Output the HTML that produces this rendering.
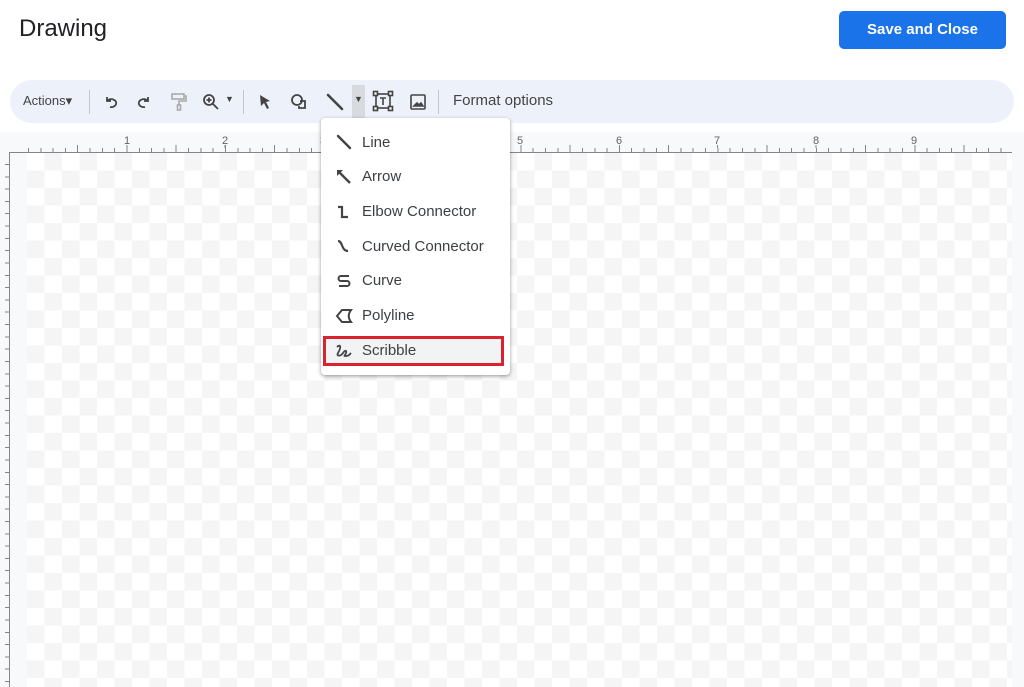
<!DOCTYPE html>
<html><head><meta charset="utf-8"><style>
*{margin:0;padding:0;box-sizing:border-box}
body{width:1024px;height:687px;overflow:hidden;background:#fff;font-family:"Liberation Sans",Arial,sans-serif;position:relative;color:#3c4043}
.title{position:absolute;left:19px;top:15px;font-size:24px;color:#202124}
.btn{position:absolute;left:839px;top:11px;width:167px;height:38px;background:#1a73e8;border-radius:5px;color:#fff;font-weight:bold;font-size:15px;text-align:center;line-height:38px}
.tb{position:absolute;left:10px;top:80px;width:1004px;height:43px;background:#edf2fa;border-radius:22px}
.tb *{position:absolute}
.sep{width:1px;height:24px;background:#c4c7c5;top:10px}
.canvas{position:absolute;left:0;top:132px;width:1024px;height:555px;background:#f8f9fa}
.checker{position:absolute;left:27px;top:153px;width:985px;height:534px;background-color:#fff;
background-image:conic-gradient(#f5f5f5 25%,#fff 0 50%,#f5f5f5 0 75%,#fff 0);background-size:35px 35px}
.hl{position:absolute;left:9px;top:152px;width:1003px;height:1px;background:#80868b}
.vl{position:absolute;left:9px;top:152px;width:1px;height:535px;background:#80868b}
.ht{position:absolute;left:28px;top:148px;width:984px;height:4px;background:repeating-linear-gradient(90deg,#80868b 0 1px,transparent 1px 12.31px)}
.ht2{position:absolute;left:77px;top:145px;width:935px;height:3px;background:repeating-linear-gradient(90deg,#80868b 0 1px,transparent 1px 49.25px)}
.vt{position:absolute;left:5px;top:153px;width:4px;height:534px;background:repeating-linear-gradient(180deg,transparent 0 11px,#80868b 11px 12px,transparent 12px 12.31px)}
.num{position:absolute;top:135px;font-size:11px;color:#5f6368}
.menu{position:absolute;left:321px;top:118px;width:189px;height:257px;background:#fff;border-radius:4px;box-shadow:0 1px 3px rgba(0,0,0,.3),0 2px 6px rgba(0,0,0,.12)}
.it{position:absolute;left:41px;font-size:15px;color:#3c4043}
.ic{position:absolute;left:14px}
.sel{position:absolute;left:2px;top:218px;width:181px;height:30px;background:#f1f3f4;border:3px solid #d9232e}
</style></head><body>
<div class="title">Drawing</div>
<div class="btn">Save and Close</div>
<div class="tb">
<span style="left:13px;top:13px;font-size:13px;color:#444">Actions&#9662;</span>
<div class="sep" style="left:79px"></div>
<svg style="left:91px;top:12px" width="20" height="20" viewBox="0 0 20 20" fill="none" stroke="#444" stroke-width="1.8"><path d="M6 5v4h4M6 9a5 4 0 1 1 3 6"/></svg>
<svg style="left:124px;top:12px" width="20" height="20" viewBox="0 0 20 20" fill="none" stroke="#444" stroke-width="1.8"><path d="M14 5v4h-4M14 9a5 4 0 1 0-3 6"/></svg>
<svg style="left:159px;top:11px" width="20" height="22" viewBox="0 0 20 22" fill="none" stroke="#aaa" stroke-width="1.6"><rect x="3" y="3" width="12" height="5"/><path d="M15 5h2v5h-7v4"/><rect x="8.5" y="14" width="3" height="5"/></svg>
<svg style="left:191px;top:12px" width="20" height="20" viewBox="0 0 20 20" fill="none" stroke="#444" stroke-width="1.8"><circle cx="8" cy="8" r="5"/><path d="M12 12l5 5M8 5.5v5M5.5 8h5"/></svg>
<span style="left:215px;top:14px;font-size:9px;color:#444">&#9660;</span>
<div class="sep" style="left:233px"></div>
<svg style="left:245px;top:12px" width="20" height="20" viewBox="0 0 20 20"><path d="M5 3l10 6-4 1 3 6-2 1-3-6-3 3z" fill="#444"/></svg>
<svg style="left:279px;top:12px" width="20" height="20" viewBox="0 0 20 20" fill="none" stroke="#444" stroke-width="1.8"><circle cx="8" cy="8" r="5"/><path d="M11 9h5v7h-6v-2"/></svg>
<svg style="left:315px;top:12px" width="20" height="20" viewBox="0 0 20 20"><path d="M3 3l14 14" stroke="#444" stroke-width="2.6" stroke-linecap="round"/></svg>
<div style="left:342px;top:5px;width:13px;height:33px;background:#d7dbe0"></div>
<span style="left:344px;top:14px;font-size:9px;color:#444">&#9660;</span>
<svg style="left:362px;top:10px" width="22" height="22" viewBox="0 0 22 22" fill="none" stroke="#444" stroke-width="1.6"><rect x="4" y="4" width="14" height="14"/><rect x="1.5" y="1.5" width="4" height="4" fill="#edf2fa"/><rect x="16.5" y="1.5" width="4" height="4" fill="#edf2fa"/><rect x="1.5" y="16.5" width="4" height="4" fill="#edf2fa"/><rect x="16.5" y="16.5" width="4" height="4" fill="#edf2fa"/><path d="M8 8h6M11 8v7"/></svg>
<svg style="left:398px;top:12px" width="20" height="20" viewBox="0 0 20 20" fill="none" stroke="#444" stroke-width="1.6"><rect x="3" y="3" width="14" height="14" rx="1"/><path d="M6 14l3-3 2 2 2-2 2 3z" fill="#444"/></svg>
<div class="sep" style="left:428px"></div>
<span style="left:443px;top:12px;font-size:15px;color:#444">Format options</span>
</div>
<div class="canvas"></div>
<div class="checker"></div>
<div class="ht"></div><div class="ht2"></div><div class="hl"></div>
<div class="vt"></div><div class="vl"></div>
<span class="num" style="left:124px">1</span><span class="num" style="left:222px">2</span><span class="num" style="left:320px">3</span><span class="num" style="left:418px">4</span><span class="num" style="left:517px">5</span><span class="num" style="left:616px">6</span><span class="num" style="left:714px">7</span><span class="num" style="left:813px">8</span><span class="num" style="left:911px">9</span>
<div class="menu">
<div class="sel"></div>
<svg class="ic" style="top:15px" width="18" height="18" viewBox="0 0 18 18"><path d="M3 3l12 12" stroke="#444" stroke-width="2.4" stroke-linecap="round"/></svg><span class="it" style="top:16px">Line</span>
<svg class="ic" style="top:50px" width="18" height="18" viewBox="0 0 18 18"><path d="M4 4l11 11" stroke="#444" stroke-width="2.4"/><path d="M2 2h6l-6 6z" fill="#444"/></svg><span class="it" style="top:50px">Arrow</span>
<svg class="ic" style="top:85px" width="18" height="18" viewBox="0 0 18 18" fill="none" stroke="#444" stroke-width="2.2"><path d="M3 4h4v10h6"/></svg><span class="it" style="top:85px">Elbow Connector</span>
<svg class="ic" style="top:119px" width="18" height="18" viewBox="0 0 18 18" fill="none" stroke="#444" stroke-width="2.2"><path d="M3 4c5 0 3 10 10 10"/></svg><span class="it" style="top:120px">Curved Connector</span>
<svg class="ic" style="top:154px" width="18" height="18" viewBox="0 0 18 18" fill="none" stroke="#444" stroke-width="2"><path d="M14 4H6a2.5 2.5 0 0 0 0 5h6a2.5 2.5 0 0 1 0 5H4"/></svg><span class="it" style="top:154px">Curve</span>
<svg class="ic" style="top:189px" width="18" height="18" viewBox="0 0 18 18" fill="none" stroke="#444" stroke-width="2"><path d="M16 3H7L2 9l5 6h9c-3-4-3-8 0-12z"/></svg><span class="it" style="top:189px">Polyline</span>
<svg class="ic" style="top:224px" width="18" height="18" viewBox="0 0 18 18" fill="none" stroke="#444" stroke-width="1.8"><path d="M2 5c3-3 5-1 1 6-2 3 2 4 5 0 2-3 4-3 3 0s-3 3 0 3 4-2 5-3"/></svg><span class="it" style="top:224px">Scribble</span>
</div>
</body></html>
